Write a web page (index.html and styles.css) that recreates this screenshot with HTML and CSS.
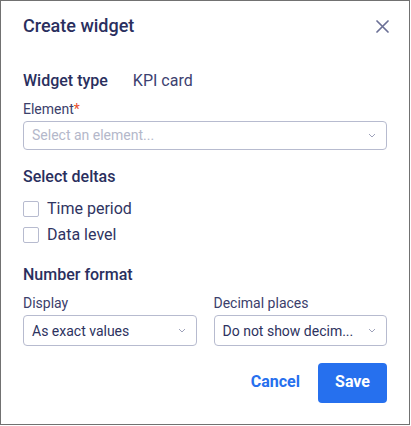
FILE: index.html
```html
<!DOCTYPE html>
<html lang="en">
<head>
<meta charset="utf-8">
<title>Create widget</title>
<link rel="stylesheet" href="styles.css">
</head>
<body>
<div class="dialog">
  <div class="header">
    <h1 class="title">Create widget</h1>
    <button class="close" aria-label="Close">
      <svg width="13" height="13" viewBox="0 0 13 13"><path d="M1 1L12 12M12 1L1 12" stroke="#6b7096" stroke-width="1.7" fill="none" stroke-linecap="round"/></svg>
    </button>
  </div>

  <div class="type-row">
    <span class="type-label">Widget type</span>
    <span class="type-value">KPI card</span>
  </div>

  <div class="field-label label-element">Element<span class="req">*</span></div>
  <div class="select select-element">
    <span class="placeholder">Select an element...</span>
    <svg class="chev" width="8" height="5" viewBox="0 0 8 5"><path d="M1 1L4 4L7 1" stroke="#9ea2ba" stroke-width="1" fill="none"/></svg>
  </div>

  <div class="section-title deltas-title">Select deltas</div>
  <div class="checks">
    <label class="check"><span class="box"></span><span class="check-text">Time period</span></label>
    <label class="check"><span class="box"></span><span class="check-text">Data level</span></label>
  </div>

  <div class="section-title format-title">Number format</div>
  <div class="format-grid">
    <div class="format-col">
      <div class="field-label">Display</div>
      <div class="select select-format">
        <span class="value">As exact values</span>
        <svg class="chev" width="8" height="5" viewBox="0 0 8 5"><path d="M1 1L4 4L7 1" stroke="#9ea2ba" stroke-width="1" fill="none"/></svg>
      </div>
    </div>
    <div class="format-col">
      <div class="field-label">Decimal places</div>
      <div class="select select-format">
        <span class="value">Do not show decim...</span>
        <svg class="chev" width="8" height="5" viewBox="0 0 8 5"><path d="M1 1L4 4L7 1" stroke="#9ea2ba" stroke-width="1" fill="none"/></svg>
      </div>
    </div>
  </div>

  <div class="footer">
    <button class="btn btn-cancel">Cancel</button>
    <button class="btn btn-save">Save</button>
  </div>
</div>
</body>
</html>
```

FILE: styles.css
```css
* {
  box-sizing: border-box;
}

html, body {
  margin: 0;
  padding: 0;
  background: #ffffff;
}

body {
  font-family: Roboto, "Liberation Sans", Arial, sans-serif;
  color: #2a2f5e;
}

.dialog {
  width: 410px;
  height: 425px;
  border: 1px solid #717171;
  padding: 13px 22px 0 22px;
  display: flex;
  flex-direction: column;
  background: #ffffff;
}

.header {
  display: flex;
  justify-content: space-between;
  align-items: center;
  height: 24px;
}

.title {
  margin: 0;
  font-size: 18px;
  line-height: 24px;
  font-weight: 500;
  color: #2a2f5e;
}

.close {
  border: 0;
  background: transparent;
  padding: 0;
  margin-right: -2px;
  width: 13px;
  height: 13px;
  display: flex;
  cursor: pointer;
}

.type-row {
  margin-top: 32.5px;
  display: flex;
  gap: 25px;
  font-size: 16px;
  line-height: 20px;
}

.type-label {
  font-weight: 500;
  color: #2a2f5e;
}

.type-value {
  color: #3c4170;
}

.field-label {
  font-size: 14px;
  line-height: 16px;
  color: #3b406b;
}

.label-element {
  margin-top: 10px;
}

.req {
  color: #e8502e;
}

.select {
  margin-top: 4px;
  border: 1px solid #b7bbcf;
  border-radius: 4px;
  display: flex;
  align-items: center;
  justify-content: space-between;
  padding: 0 10px 0 8px;
  font-size: 14px;
}

.select-element {
  height: 29px;
}

.select-format {
  height: 31px;
}

.placeholder {
  color: #b4b8ca;
}

.value {
  color: #2d3260;
}

.chev {
  display: block;
  flex: none;
}

.section-title {
  font-size: 16px;
  line-height: 20px;
  font-weight: 500;
  color: #2a2f5e;
}

.deltas-title {
  margin-top: 17px;
}

.checks {
  margin-top: 12px;
  display: flex;
  flex-direction: column;
  gap: 6px;
}

.check {
  display: flex;
  align-items: center;
  height: 20px;
  gap: 8px;
}

.box {
  width: 16px;
  height: 16px;
  border: 1px solid #b7bbcf;
  border-radius: 2px;
  background: #ffffff;
  flex: none;
}

.check-text {
  font-size: 16px;
  line-height: 20px;
  color: #2f3462;
}

.format-title {
  margin-top: 20.5px;
}

.format-grid {
  margin-top: 10px;
  display: grid;
  grid-template-columns: 1fr 1fr;
  column-gap: 17px;
}

.footer {
  margin-top: 16.5px;
  display: flex;
  justify-content: flex-end;
}

.btn {
  border: 0;
  font-family: Roboto, "Liberation Sans", Arial, sans-serif;
  font-size: 16px;
  font-weight: 700;
  height: 40px;
  padding: 0 17px 3px 17px;
  border-radius: 4px;
  display: flex;
  align-items: center;
  cursor: pointer;
}

.btn-cancel {
  background: transparent;
  color: #2670ee;
  padding-left: 0;
  padding-right: 18px;
}

.btn-save {
  background: #2670ee;
  color: #ffffff;
  width: 69px;
  justify-content: center;
}
```
